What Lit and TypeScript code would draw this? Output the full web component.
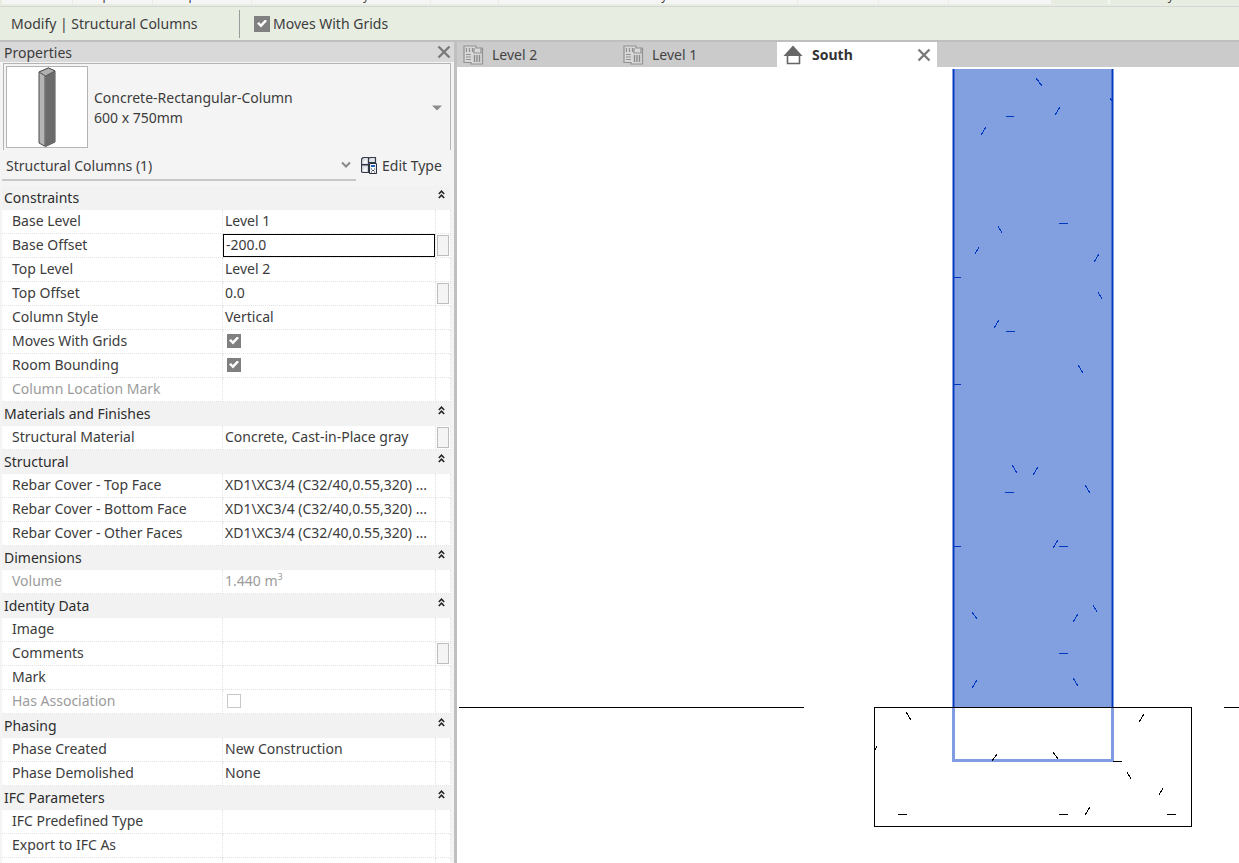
import { LitElement, html, svg, css, nothing } from "lit";
import { customElement, property } from "lit/decorators.js";

type Row = {
  label: string;
  value?: string;
  sup?: string;
  kind?: "edit" | "check";
  checked?: boolean;
  dim?: boolean;
  more?: boolean;
};
type Group = { title: string; rows: Row[] };

const GROUPS: Group[] = [
  {
    title: "Constraints",
    rows: [
      { label: "Base Level", value: "Level 1" },
      { label: "Base Offset", value: "-200.0", kind: "edit", more: true },
      { label: "Top Level", value: "Level 2" },
      { label: "Top Offset", value: "0.0", more: true },
      { label: "Column Style", value: "Vertical" },
      { label: "Moves With Grids", kind: "check", checked: true },
      { label: "Room Bounding", kind: "check", checked: true },
      { label: "Column Location Mark", dim: true },
    ],
  },
  {
    title: "Materials and Finishes",
    rows: [{ label: "Structural Material", value: "Concrete, Cast-in-Place gray", more: true }],
  },
  {
    title: "Structural",
    rows: [
      { label: "Rebar Cover - Top Face", value: "XD1\\XC3/4 (C32/40,0.55,320) ..." },
      { label: "Rebar Cover - Bottom Face", value: "XD1\\XC3/4 (C32/40,0.55,320) ..." },
      { label: "Rebar Cover - Other Faces", value: "XD1\\XC3/4 (C32/40,0.55,320) ..." },
    ],
  },
  { title: "Dimensions", rows: [{ label: "Volume", value: "1.440 m", sup: "3", dim: true }] },
  {
    title: "Identity Data",
    rows: [
      { label: "Image" },
      { label: "Comments", more: true },
      { label: "Mark" },
      { label: "Has Association", kind: "check", dim: true },
    ],
  },
  {
    title: "Phasing",
    rows: [
      { label: "Phase Created", value: "New Construction" },
      { label: "Phase Demolished", value: "None" },
    ],
  },
  {
    title: "IFC Parameters",
    rows: [{ label: "IFC Predefined Type" }, { label: "Export to IFC As" }, { label: "" }],
  },
];

const checkStyles = css`
  .check {
    appearance: none;
    flex: none;
    display: grid;
    place-content: center;
    box-sizing: border-box;
    width: 14px;
    height: 14px;
    margin: 0;
    border: 1px solid #c8c8c8;
    background: #fff;
  }
  .check:checked {
    border-color: #808080;
    background: #808080;
  }
  .check:checked::before {
    content: "";
    width: 10px;
    height: 8px;
    background: #fff;
    clip-path: polygon(0 50%, 20% 30%, 38% 55%, 82% 0, 100% 18%, 40% 100%);
  }
`;

const closeIcon = html`<svg width="14" height="14" viewBox="0 0 14 14" aria-hidden="true">
  <path d="M1.5 1.5 12.5 12.5M12.5 1.5 1.5 12.5" fill="none" stroke="#7a7a7a" stroke-width="2.4" />
</svg>`;

@customElement("ribbon-strip")
class RibbonStrip extends LitElement {
  static styles = [
    checkStyles,
    css`
      :host {
        display: block;
        background: #e8ede2;
        border-bottom: 2px solid #bfbfbf;
      }
      .panels {
        display: flex;
        gap: 1px;
        height: 4px;
        padding: 0 0 2px 2px;
        overflow: hidden;
        border-bottom: 1px solid #d6d6d6;
      }
      .panel {
        display: flex;
        justify-content: center;
        align-items: flex-end;
        height: 4px;
        overflow: hidden;
        background: #f5f5f5;
        color: #444;
        font-size: 12px;
        line-height: 16px;
      }
      .w1 { width: 70px; }
      .w2 { width: 79px; }
      .w3 { width: 98px; }
      .w4 { width: 178px; }
      .w5 { width: 67px; }
      .w6 { width: 298px; }
      .w7 { width: 80px; }
      .w8 { width: 69px; }
      .w9 { width: 102px; }
      .context { flex: 1; padding-left: 24px; justify-content: flex-start; background: none; }
      .tail { width: 56px; background: none; border: solid #f5f5f5; border-width: 0 2px 0 0; }
      .options {
        display: flex;
        align-items: center;
        height: 33px;
        padding-left: 11px;
      }
      .title { width: 228px; padding-top: 1px; }
      .rule { width: 1px; height: 28px; margin-right: 14px; background: #9a9a9a; }
      .option { display: flex; align-items: center; gap: 3px; }
      .caption { padding-top: 1px; }
      .large { width: 16px; height: 16px; }
    `,
  ];
  render() {
    return html`
      <div class="panels">
        <div class="panel w1"></div>
        <div class="panel w2">Properties</div>
        <div class="panel w3">Clipboard</div>
        <div class="panel w4">Geometry</div>
        <div class="panel w5"></div>
        <div class="panel w6">Modify</div>
        <div class="panel w7"></div>
        <div class="panel w8"></div>
        <div class="panel w9"></div>
        <div class="panel tail"></div>
        <div class="panel context">Modify</div>
      </div>
      <div class="options">
        <span class="title">Modify | Structural Columns</span>
        <span class="rule"></span>
        <label class="option">
          <input class="check large" type="checkbox" checked />
          <span class="caption">Moves With Grids</span>
        </label>
      </div>
    `;
  }
}

@customElement("properties-panel")
class PropertiesPanel extends LitElement {
  @property({ attribute: false }) groups: Group[] = [];

  static styles = [
    checkStyles,
    css`
      :host {
        display: flex;
        flex-direction: column;
        box-sizing: border-box;
        background: #f4f4f4;
        border-right: 3px solid #c0c0c0;
        overflow: hidden;
      }
      button, input, select {
        font: inherit;
        color: inherit;
      }
      button {
        padding: 0;
        border: 0;
        background: none;
      }
      .bar {
        display: flex;
        justify-content: space-between;
        align-items: center;
        height: 20px;
        flex: none;
        padding: 0 3px 0 4px;
        background: #d9d9d9;
      }
      .bar-title { padding-top: 2px; }
      .icon { display: grid; place-items: center; }
      .type {
        display: flex;
        align-items: flex-start;
        gap: 6px;
        flex: none;
        height: 87px;
        margin: 1px 3px 0 3px;
        padding: 2px 8px 0 2px;
        border: solid #b4b4b4;
        border-width: 1px 1px 0 1px;
        text-align: left;
      }
      .thumb {
        display: grid;
        place-items: center;
        width: 80px;
        height: 80px;
        border: 1px solid #b4b4b4;
        background: #fff;
      }
      .names { flex: 1; padding-top: 22px; line-height: 20px; }
      .arrow { margin-top: 39px; }
      .filter { display: flex; flex: none; height: 31px; padding-left: 2px; }
      .pick {
        position: relative;
        display: flex;
        width: 354px;
        border-bottom: 2px solid #c8c8c8;
      }
      .select {
        appearance: none;
        width: 100%;
        padding: 2px 20px 0 4px;
        border: 0;
        background: none;
      }
      .chev { position: absolute; right: 5px; top: 11px; pointer-events: none; }
      .edit-type { display: flex; align-items: center; gap: 5px; padding-left: 5px; }
      .table {
        table-layout: fixed;
        width: 449px;
        margin: 5px 0 0 2px;
        border-spacing: 0;
        background: #fff;
      }
      .c1 { width: 221px; }
      .c2 { width: 213px; }
      .c3 { width: 15px; }
      th, td {
        height: 24px;
        box-sizing: border-box;
        padding: 0;
        font-weight: 400;
        text-align: left;
        white-space: nowrap;
        line-height: 20px;
      }
      .cell {
        border: dotted #e2e2e2;
        border-width: 0 1px 1px 0;
      }
      .label { padding: 0 0 2px 10px; }
      .value { padding: 0 0 2px 2px; }
      .flush { padding: 0; }
      .dim { color: #9b9b9b; }
      .head { background: #f2f2f2; color: #2d2d2d; }
      .head-row { display: flex; align-items: center; justify-content: space-between; padding: 0 6px 0 2px; }
      .fold { display: grid; height: 16px; align-items: start; }
      .field {
        display: block;
        box-sizing: border-box;
        width: 212px;
        height: 23px;
        padding: 0 2px 2px;
        border: 1px solid #000;
        outline: 0;
        background: #fff;
      }
      .more {
        display: block;
        box-sizing: border-box;
        width: 12px;
        height: 21px;
        margin-left: 1px;
        border: 1px solid #bdbdbd;
        background: #f4f4f4;
      }
      .sup { font-size: 9px; line-height: 0; vertical-align: 6px; }
      .value .check { margin-left: 2px; }
    `,
  ];

  private row(r: Row, id: string) {
    const dim = r.dim ? "dim" : "";
    const control =
      r.kind === "edit"
        ? html`<input id=${id} class="field" type="text" .value=${r.value ?? ""} />`
        : r.kind === "check"
          ? html`<input id=${id} class="check" type="checkbox" .checked=${!!r.checked} ?disabled=${!!r.dim} />`
          : html`${r.value ?? ""}${r.sup ? html`<sup class="sup">${r.sup}</sup>` : nothing}`;
    return html`<tr>
      <th class="cell label ${dim}" scope="row">
        ${r.kind ? html`<label for=${id}>${r.label}</label>` : r.label}
      </th>
      <td class="cell value ${dim} ${r.kind === "edit" ? "flush" : ""}">${control}</td>
      <td class="cell">${r.more ? html`<button class="more" aria-label="Browse ${r.label}"></button>` : nothing}</td>
    </tr>`;
  }

  render() {
    return html`
      <div class="bar">
        <span class="bar-title">Properties</span>
        <button class="icon" aria-label="Close properties">${closeIcon}</button>
      </div>
      <button class="type">
        <span class="thumb">
          <svg width="18" height="80" viewBox="0 0 18 80" aria-hidden="true">
            <path d="M1 5 10.500 1 17 4V75L7.500 79.500 1 76Z" fill="#b5b5b5" stroke="#4a4a4a" stroke-width="1" />
            <path d="M7.500 9 17 4V75L7.500 79.500Z" fill="#6b6b6b" />
            <path d="M1 5 10.500 1 17 4 7.500 9Z" fill="#b0b0b0" stroke="#555" stroke-width="1" />
            <path d="M7 9V79" stroke="#555" stroke-width="1" />
          </svg>
        </span>
        <span class="names">Concrete-Rectangular-Column<br />600 x 750mm</span>
        <svg class="arrow" width="10" height="6" viewBox="0 0 10 6" aria-hidden="true">
          <path d="M0 .5H10L5 5.500Z" fill="#8c8c8c" />
        </svg>
      </button>
      <div class="filter">
        <div class="pick">
          <select class="select" aria-label="Element filter">
            <option>Structural Columns (1)</option>
          </select>
          <svg class="chev" width="10" height="8" viewBox="0 0 10 8" aria-hidden="true">
            <path d="M1 1.500 5 5.500 9 1.500" fill="none" stroke="#8a8a8a" stroke-width="2" />
          </svg>
        </div>
        <button class="edit-type">
          <svg width="16" height="17" viewBox="0 0 16 17" aria-hidden="true">
            <path d="M.5 3.500Q.5 .5 3.500 .5H7.500V7.500H.5ZM7.500 2.500Q7.500 .5 10.500 .5H14.500V5.500H7.500ZM.5 8H7.500V15.500H2Q.5 15.500 .5 14Z" fill="#dfe2e7" stroke="#333a48" stroke-width="1.200" />
            <path d="M2 6 5.500 2.500V6ZM2 14 5.500 10V14Z" fill="#fff" />
            <rect x="8.500" y="6.500" width="7" height="10" rx=".8" fill="#fff" stroke="#2b3240" stroke-width="1.200" />
            <rect x="10" y="8" width="4" height="2" fill="#1f5fb4" />
            <path d="M10 12h1M13 12h1M11 13.500h2M10 15h1M13 15h1" stroke="#333a48" stroke-width="1" />
          </svg>
          Edit Type
        </button>
      </div>
      <table class="table">
        <colgroup><col class="c1" /><col class="c2" /><col class="c3" /></colgroup>
        ${this.groups.map(
          (g, gi) => html`<tbody>
            <tr>
              <th class="head" colspan="3" scope="rowgroup">
                <div class="head-row">
                  <span>${g.title}</span>
                  <button class="fold" aria-label="Collapse ${g.title}">
                    <svg width="7" height="9" viewBox="0 0 7 9" aria-hidden="true">
                      <path d="M.8 4 3.500 1.200 6.200 4M.8 8 3.500 5.200 6.200 8" fill="none" stroke="#222" stroke-width="1.500" />
                    </svg>
                  </button>
                </div>
              </th>
            </tr>
            ${g.rows.map((r, ri) => this.row(r, `p${gi}-${ri}`))}
          </tbody>`
        )}
      </table>
    `;
  }
}

/* Concrete hatch strokes: x1, y1, x2, y2 in drawing units. */
const COLUMN_HATCH = [
  [1036, 78, 1042, 86], [1060, 107, 1055, 115], [1006, 116, 1013, 116], [986, 127, 981, 135],
  [1110, 98, 1112, 101], [998, 226, 1002, 233], [979, 247, 975, 254], [1059, 223, 1067, 223],
  [1099, 254, 1094, 262], [954, 277, 960, 277], [1098, 292, 1102, 299], [999, 320, 994, 328],
  [1006, 331, 1014, 331], [1078, 365, 1083, 373], [954, 384, 960, 384], [1012, 465, 1017, 473],
  [1038, 467, 1033, 475], [1005, 492, 1013, 492], [1085, 485, 1090, 493], [954, 546, 960, 546],
  [1058, 540, 1053, 548], [1059, 546, 1067, 546], [972, 612, 977, 619], [1093, 605, 1097, 612],
  [1078, 614, 1073, 622], [1059, 653, 1067, 653], [977, 680, 972, 688], [1073, 678, 1078, 686],
];
const FOOTING_HATCH = [
  [906, 712, 911, 720], [877, 746, 875, 750], [997, 754, 992, 761], [1053, 752, 1058, 759],
  [1144, 714, 1139, 722], [1113, 761, 1121, 761], [1127, 772, 1131, 779], [1163, 788, 1159, 795],
  [1090, 807, 1085, 815], [898, 814, 906, 814], [1059, 814, 1067, 814], [1167, 814, 1175, 814],
];
const strokes = (list: number[][]) =>
  list
    .map(([x1, y1, x2, y2]) =>
      y1 === y2 ? `M${x1} ${y1 + 0.5}H${x2 + 1}` : `M${x1} ${y1}L${x2} ${y2}`
    )
    .join("");

@customElement("drawing-view")
class DrawingView extends LitElement {
  static styles = css`
    :host {
      display: flex;
      flex-direction: column;
      min-width: 0;
      background: #fff;
    }
    .tabs { display: flex; flex: none; height: 25px; background: #cbcbcb; }
    .tab {
      display: flex;
      align-items: center;
      gap: 8px;
      box-sizing: border-box;
      width: 160px;
      padding: 0 6px;
      border: 0;
      background: none;
      color: #444;
      font: inherit;
    }
    .active { background: #fff; color: #333; font-weight: 700; }
    .name { flex: 1; text-align: left; }
    .canvas { flex: 1; min-height: 0; overflow: hidden; }
    .drawing { display: block; width: 100%; }
  `;

  private plan = () => html`<svg width="21" height="20" viewBox="0 0 21 20" aria-hidden="true">
    <path d="M1 1H13V3H19.500V19H8V17.500H1Z" fill="#d8d8d8" stroke="#929292" stroke-width="1.200" />
    <path d="M3.500 3V7M6.500 3V7M9.500 3V7M3 9.500H8M3 12H8M3 14.500H8M11 3V8H18V3" fill="none" stroke="#929292" stroke-width="1.200" />
    <path d="M11.500 10V17M14 10V17M16.500 10V17" fill="none" stroke="#8a8a8a" stroke-width="1.400" />
  </svg>`;

  render() {
    return html`
      <div class="tabs" role="tablist">
        <button class="tab" role="tab">${this.plan()}<span class="name">Level 2</span></button>
        <button class="tab" role="tab">${this.plan()}<span class="name">Level 1</span></button>
        <button class="tab active" role="tab" aria-selected="true">
          <svg width="21" height="20" viewBox="0 0 21 20" aria-hidden="true">
            <path d="M4.500 10H16.500V18.500H4.500Z" fill="#fff" stroke="#666" stroke-width="1.600" />
            <path d="M.5 11 10 .5 19.500 11Z" fill="#666" />
          </svg>
          <span class="name">South</span>
          ${closeIcon}
        </button>
      </div>
      <div class="canvas">
        <svg class="drawing" viewBox="457 67 782 796" role="img" aria-label="South elevation" shape-rendering="crispEdges">
          <rect x="952" y="69" width="162" height="638" fill="#829fdf" />
          <path d="M954.500 69V707M1111.500 69V707" stroke="#4a70d4" fill="none" />
          <path d="M953.500 69V707M1112.500 69V707" stroke="#0038c0" fill="none" />
          <path d="M953.500 708V760.500H1112.500V708" stroke="#7f9de0" stroke-width="3" fill="none" />
          <path d=${strokes(COLUMN_HATCH)} stroke="#0038c0" fill="none" />
          ${svg`<path d=${strokes(FOOTING_HATCH)} stroke="#000" fill="none" />`}
          <path d="M874.500 707.500H1191.500V826.500H874.500ZM459 707.500H804M1224 707.500H1239" stroke="#000" fill="none" />
        </svg>
      </div>
    `;
  }
}

@customElement("app-root")
class AppRoot extends LitElement {
  static styles = css`
    :host {
      display: grid;
      grid-template-rows: auto minmax(0, 1fr);
      height: 100vh;
      overflow: hidden;
      color: #3c3c3c;
      font: 14px/20px "Noto Sans", "Open Sans", sans-serif;
    }
    .work {
      display: grid;
      grid-template-columns: 457px minmax(0, 1fr);
      min-height: 0;
    }
  `;
  render() {
    return html`
      <ribbon-strip></ribbon-strip>
      <div class="work">
        <properties-panel .groups=${GROUPS}></properties-panel>
        <drawing-view></drawing-view>
      </div>
    `;
  }
}
